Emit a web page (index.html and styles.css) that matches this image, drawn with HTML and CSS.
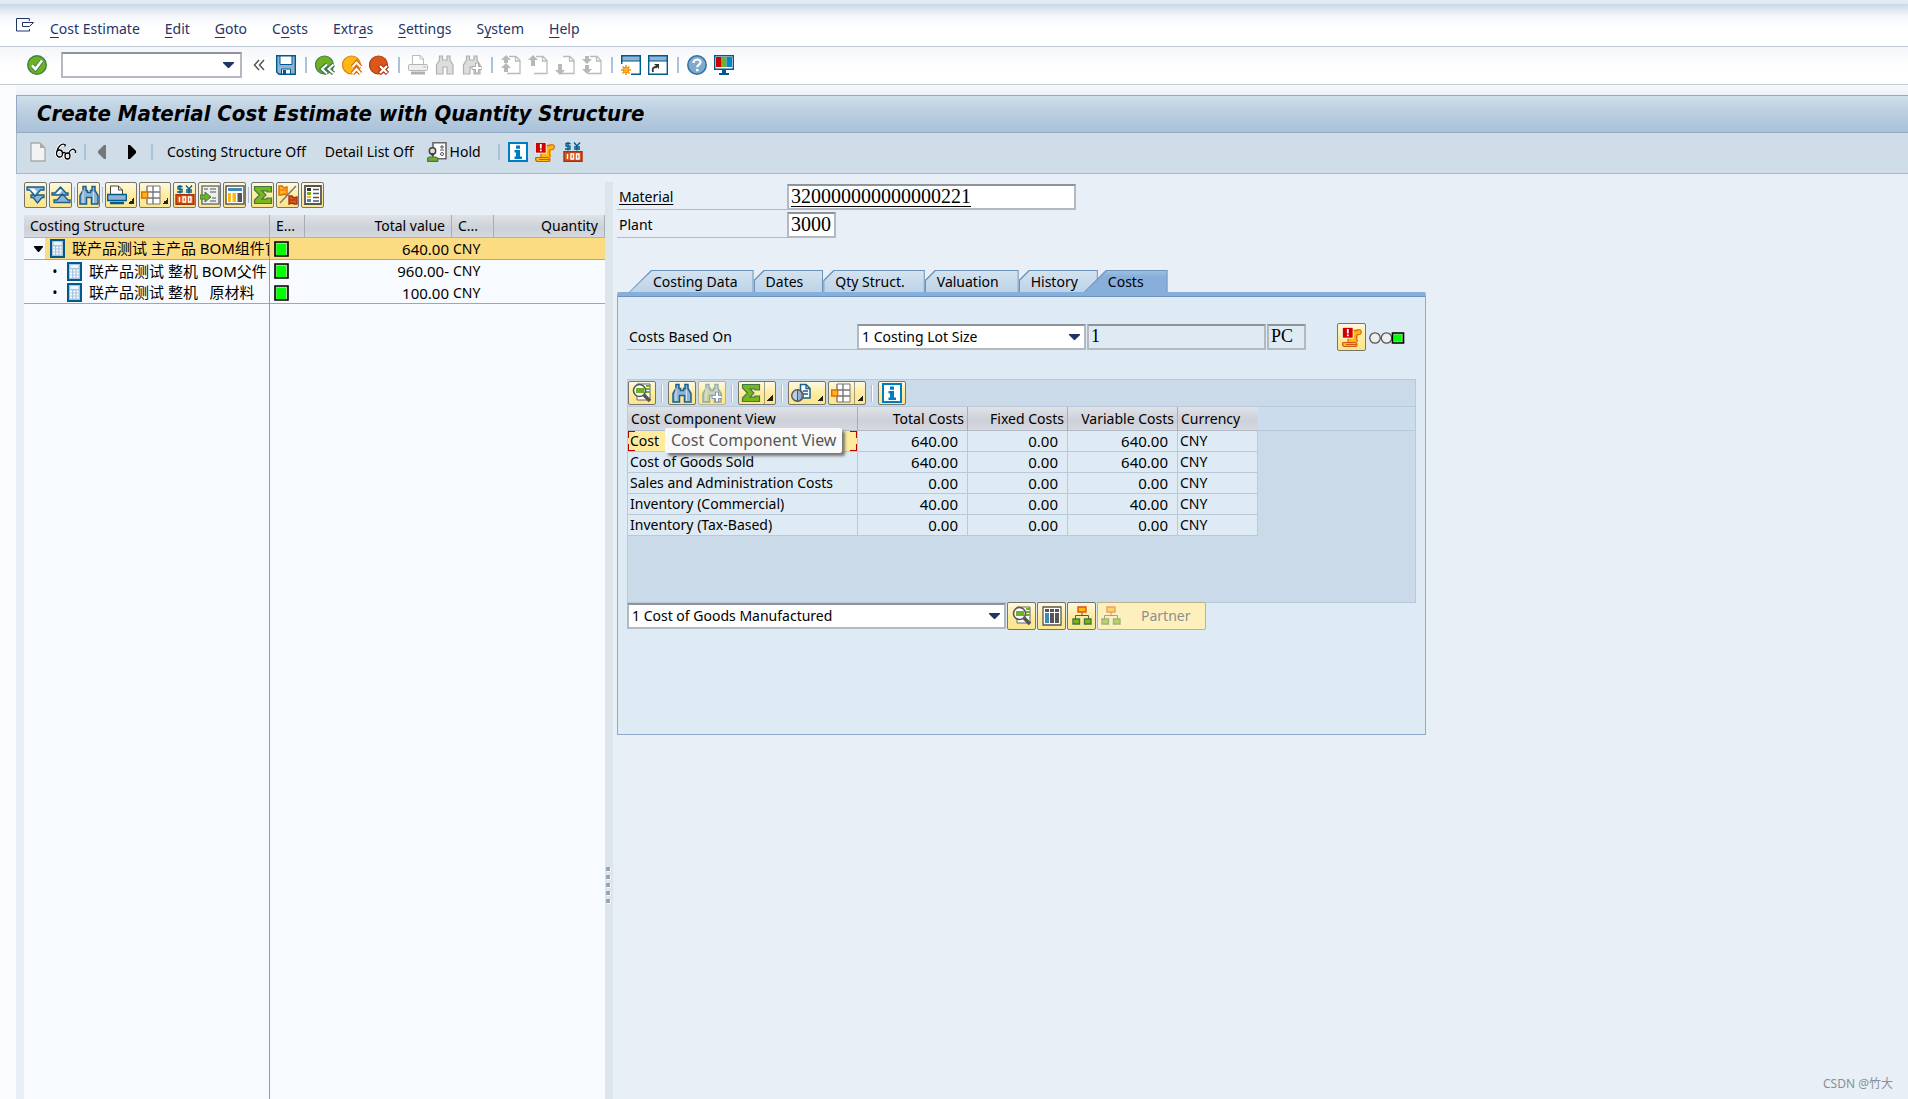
FILE: index.html
```html
<!DOCTYPE html>
<html lang="en">
<head>
<meta charset="utf-8">
<title>Create Material Cost Estimate with Quantity Structure</title>
<link rel="stylesheet" href="styles.css">
</head>
<body>
<svg class="defs" aria-hidden="true">
  <symbol id="ok" viewBox="0 0 20 20"><circle cx="10" cy="10" r="9.3" fill="#6fb024" stroke="#3f8048" stroke-width="1.4"/><path d="M5 10.500l3.500 3.500L15 5.500" fill="none" stroke="#3f8048" stroke-width="4.500"/><path d="M5 10.500l3.500 3.500L15 5.500" fill="none" stroke="#fff" stroke-width="2.600"/></symbol>
  <symbol id="save" viewBox="0 0 20 20"><path d="M.7 .7h18.600v18.600H3L.7 17z" fill="#8fb4d8" stroke="#005a8c" stroke-width="1.400"/><path d="M4 1h12v8.500H4z" fill="#fff" stroke="#005a8c"/><path d="M5.500 14h9v5h-9z" fill="#fff" stroke="#005a8c"/><path d="M7 15h3v4H7z" fill="#005a8c"/></symbol>
  <symbol id="back" viewBox="0 0 20 20"><circle cx="9.500" cy="10" r="9" fill="#6fb024" stroke="#3f8048" stroke-width="1.200"/><path d="M12 9.500L7 14l5 4.500M18.500 9.500L13.500 14l5 4.500" fill="none" stroke="#3f7848" stroke-width="4.500"/><path d="M12 9.500L7 14l5 4.500M18.500 9.500L13.500 14l5 4.500" fill="none" stroke="#fff" stroke-width="2"/></symbol>
  <symbol id="exit" viewBox="0 0 20 20"><circle cx="9.500" cy="10" r="9" fill="#fdb913" stroke="#e57a10" stroke-width="1.200"/><path d="M10.500 12l4-4.500 4 4.500M10.500 18.500l4-4.500 4 4.500" fill="none" stroke="#d96a10" stroke-width="4.500"/><path d="M10.500 12l4-4.500 4 4.500M10.500 18.500l4-4.500 4 4.500" fill="none" stroke="#fff" stroke-width="2"/></symbol>
  <symbol id="cancel" viewBox="0 0 20 20"><circle cx="9.500" cy="10" r="9" fill="#d9581a" stroke="#b33c10" stroke-width="1.200"/><path d="M10.500 10.500l8 8m0-8l-8 8" stroke="#a83010" stroke-width="4.500"/><path d="M11 11l7 7m0-7l-7 7" stroke="#fff" stroke-width="2.400"/></symbol>
  <symbol id="print-off" viewBox="0 0 20 20"><path d="M4.500 9V.5h8l3 3V9" fill="#fff" stroke="#bbb"/><path d="M12 .5V4h3.500" fill="none" stroke="#bbb"/><rect x=".5" y="9.500" width="19" height="6" rx="1" fill="#eee" stroke="#b5b5b5"/><path d="M15 12h3" stroke="#bbb"/><path d="M3 18h14" stroke="#b0b0b0" stroke-width="3"/></symbol>
  <symbol id="find-off" viewBox="0 0 20 20"><path d="M4.500 1h3v4H12V1h3v4l3 5v9h-6v-7H8v7H1.500v-9l3-5z" fill="#ddd" stroke="#b0b0b0" stroke-width="1.200"/></symbol>
  <symbol id="findnext-off" viewBox="0 0 20 20"><path d="M4.500 1h3v4H12V1h3v4l3 5v9h-6v-7H8v7H1.500v-9l3-5z" fill="#ddd" stroke="#b0b0b0" stroke-width="1.200"/><path d="M13.500 8h3v3.500H20v3h-3.500V18h-3v-3.500H10v-3h3.500z" fill="#fff" stroke="#aaa"/></symbol>
  <symbol id="sheet" viewBox="0 0 20 20"><path d="M6.500 18.500V1.500h8l5 5v12z" fill="#fff"/><path d="M8 1.500h7l4 4v13H6M14.500 1.500V6h5" fill="none" stroke="#bbb" stroke-width="1.300"/></symbol>
  <symbol id="first" viewBox="0 0 20 20"><use href="#sheet"/><path d="M5 0l5 5H7v3H3V5H0zM5 8l5 5H7v4H3v-4H0z" fill="#b8b8b8"/></symbol>
  <symbol id="prev" viewBox="0 0 20 20"><use href="#sheet"/><path d="M5 0l5 5H7v6H3V5H0z" fill="#b8b8b8"/></symbol>
  <symbol id="next" viewBox="0 0 20 20"><use href="#sheet"/><path d="M5 20l5-5H7V9H3v6H0z" fill="#b8b8b8"/></symbol>
  <symbol id="last" viewBox="0 0 20 20"><use href="#sheet"/><path d="M5 9l5-5H7V1H3v3H0zM5 19l5-5H7v-4H3v4H0z" fill="#b8b8b8"/></symbol>
  <symbol id="session" viewBox="0 0 20 20"><path d="M.7 .7h18.600v18.600H.7z" fill="#fff" stroke="#005a8c" stroke-width="1.400"/><path d="M1 1h18v5H1z" fill="#8fb4d8" stroke="#005a8c"/><path d="M0 9h10v11H0z" fill="#fff"/><path d="M5 10v10M0 15h10M1.500 11.500l7 7m0-7l-7 7" stroke="#f39200" stroke-width="1.500"/><circle cx="5" cy="15" r="2.800" fill="#fbb03b" stroke="#f39200"/></symbol>
  <symbol id="shortcut" viewBox="0 0 20 20"><path d="M.7 .7h18.600v18.600H.7z" fill="#fff" stroke="#005a8c" stroke-width="1.400"/><path d="M1 1h18v5H1z" fill="#8fb4d8" stroke="#005a8c"/><path d="M5 17c-1-4 0-5 4-5" fill="none" stroke="#333" stroke-width="1.800"/><path d="M6 9h5v5z" fill="#333"/></symbol>
  <symbol id="help" viewBox="0 0 20 20"><circle cx="10" cy="10" r="9.200" fill="#7fa9cf" stroke="#2f6f9f" stroke-width="1.500"/><path d="M6.500 8c0-4.500 7-4.500 7-.8 0 2.300-3.300 2.500-3.300 5" fill="none" stroke="#fff" stroke-width="2.200"/><path d="M9 14h2.500v2.300H9z" fill="#fff"/></symbol>
  <symbol id="monitor" viewBox="0 0 20 20"><path d="M.7 .7h18.600v13.600H.7z" fill="#fff" stroke="#005a8c" stroke-width="1.400"/><path d="M2 2h5v10H2z" fill="#c00"/><path d="M7 2h5.500v10H7z" fill="#6fb024"/><path d="M12.500 2H18v10h-5.500z" fill="#0a84c8"/><path d="M8 14.500h4V18h3v2H5v-2h3z" fill="#005a8c"/></symbol>
  <symbol id="page" viewBox="0 0 16 20"><path d="M1 1h9l5 5v13H1z" fill="#f3f3f3" stroke="#aaa" stroke-width="1.300"/><path d="M10 1v5h5z" fill="#aaa"/></symbol>
  <symbol id="glasses" viewBox="0 0 22 18"><path d="M1.500 10.500a3 3.500 0 1 1 6 0 3 3.500 0 1 1-6 0zM10 13a2.500 3 0 1 1 5 0 2.500 3 0 1 1-5 0M2 8c1-4 4-8 8-6.500M14 10c1-4 5-5 6.500-2" fill="none" stroke="#fff" stroke-width="3"/><path d="M1.500 10.500a3 3.500 0 1 1 6 0 3 3.500 0 1 1-6 0zM10 13a2.500 3 0 1 1 5 0 2.500 3 0 1 1-5 0M7 11c1-2 3-2 4 0M2 8c1-4 4-8 8-6.500v2M14 10c1-4 5-5 6.500-2v2" fill="none" stroke="#000" stroke-width="1.300"/></symbol>
  <symbol id="person" viewBox="0 0 20 20"><path d="M6 .8h13v16H6z" fill="#fff" stroke="#666" stroke-width="1.600"/><path d="M13 5h4M15 3v4M13 8h4" stroke="#555"/><circle cx="15" cy="12" r="1.500" fill="none" stroke="#555"/><circle cx="5.500" cy="9" r="3.200" fill="#ddd" stroke="#444" stroke-width="1.500"/><path d="M3 11l2.500 4L8 11z" fill="#444"/><path d="M.7 19.300v-3.300l2-1h6l2 1v3.300z" fill="#6fb024" stroke="#3f7848" stroke-width="1.200"/></symbol>
  <symbol id="info" viewBox="0 0 20 20"><path d="M1 1h18v18H1z" fill="#fff" stroke="#007cc0" stroke-width="2"/><path d="M8 3.500h4v3.300H8zM6.500 8H12v6.500h2V17H6.500v-2.500H8v-4H6.500z" fill="#007cc0"/></symbol>
  <symbol id="scroll" viewBox="0 0 20 20"><path d="M6 3.500h10v11.500H6z" fill="#fdb913"/><path d="M14 3.500c4-2 6 0 5 2.500-.5 1.500-2 1.800-3 1.500" fill="#fdb913" stroke="#e07010" stroke-width="1.300"/><path d="M11 3.500h5M6 11v4M15.500 7c-1.500 2-1.500 5 0 8" fill="none" stroke="#e07010" stroke-width="1.300"/><path d="M1 15.500h12c1.500 0 2 .5 2 2s-.5 2-2 2H2c-1.500-1-1.500-3-1-4z" fill="#fdb913" stroke="#d05a10" stroke-width="1.200"/><path d="M4 17.500h10" stroke="#d05a10"/><path d="M0 0h11.500v11.500H0z" fill="#fff"/><path d="M.8 .8h9.900v9.900H.8z" fill="#c00"/><path d="M4.900 2h1.800v4.500H4.900zM4.900 7.500h1.800v1.700H4.900z" fill="#fff"/></symbol>
  <symbol id="price" viewBox="0 0 20 20"><path d="M7.500 1.500H3v2.700h4V7H2M5 0v8.500M11 .5l3 3.500 3-3.500M11 5h6M11 7h6M14 4v4.500" fill="none" stroke="#005a8c" stroke-width="1.300"/><path d="M1 9.700h18v9.600H1z" fill="#d9581a" stroke="#a83010" stroke-width="1.400"/><path d="M4.500 12v5M8 12h2.500v5H8zM13.500 12H16v5h-2.500z" fill="none" stroke="#fff" stroke-width="1.400"/></symbol>
  <symbol id="expand" viewBox="0 0 20 20"><path d="M5 10h13v2.500h-2L11.500 18 7 12.500H5z" fill="#8fb4d8" stroke="#1a5f8c" stroke-width="1.300"/><path d="M1 2h17v3h-3.500L9 11.500 4 5H1z" fill="#8fb4d8" stroke="#1a5f8c" stroke-width="1.300"/><path d="M3 3.500h5l3 3-2 2.500z" fill="#fff"/></symbol>
  <symbol id="collapse" viewBox="0 0 20 20"><path d="M1 10v-2h3L9.500 2 15 8h2v2z" fill="#8fb4d8" stroke="#1a5f8c" stroke-width="1.300"/><path d="M3 17.500v-2.500h3l5.500-6 5.500 6h2v2.500z" fill="#8fb4d8" stroke="#1a5f8c" stroke-width="1.300"/><path d="M5 9l4.500-5 1.500 2-3 3z" fill="#fff"/></symbol>
  <symbol id="find" viewBox="0 0 20 20"><path d="M4 1.500h3v4h1.500v2h3v-2H13v-4h3v4l3 5V19h-6.500v-6.500h-5V19H1v-8.500l3-5z" fill="#8fb4d8" stroke="#1a5f8c" stroke-width="1.500"/><path d="M4 5v13M14.500 7v11" stroke="#d5e4f2"/></symbol>
  <symbol id="findnext" viewBox="0 0 20 20"><g opacity=".45"><use href="#find"/></g><path d="M13.500 9h3v3.500H20v3h-3.500V19h-3v-3.500H10v-3h3.500z" fill="#fff" stroke="#7f93c0"/></symbol>
  <symbol id="print" viewBox="0 0 20 20"><path d="M3.500 9V1h8l4 4v4" fill="#fff" stroke="#444"/><path d="M11.500 1v4h4" fill="none" stroke="#444"/><path d="M.7 9.500h18.600v6H.7z" fill="#8fb4d8" stroke="#005a8c" stroke-width="1.300"/><path d="M3 18h14" stroke="#005a8c" stroke-width="2.500"/></symbol>
  <symbol id="layout" viewBox="0 0 20 20"><path d="M6 1h13v18H6" fill="#fff" stroke="#777"/><path d="M12 1v18M6 1v18M6 7h13M6 13h13" stroke="#777" stroke-width="1.400"/><path d="M.7 7h6v6h-6z" fill="#fdb913" stroke="#e06a10" stroke-width="1.400"/></symbol>
  <symbol id="assign" viewBox="0 0 20 20"><path d="M2 1h17v18H2z" fill="#eee" stroke="#777" stroke-width="1.600"/><path d="M4 4h4M10 4h6M10 7h6M12 13h4M10 16h6" stroke="#888" stroke-width="1.500"/><path d="M0 10h5V7l6 5-6 5v-3H0z" fill="#6fb024" stroke="#3f7848"/></symbol>
  <symbol id="columns" viewBox="0 0 20 20"><path d="M1 1h18v18H1z" fill="#fff" stroke="#555" stroke-width="1.500"/><path d="M3 3h14v3H3z" fill="#3f88b8"/><path d="M3 8h3v9H3z" fill="#fdb913"/><path d="M7.500 8H11v9H7.500z" fill="#fdb913"/><path d="M12.500 8H17v9h-4.500z" fill="#555"/></symbol>
  <symbol id="sum" viewBox="0 0 20 20"><path d="M1.500 1.500h17V7H14V5.800H9l4 4.200-4 4.200h5V13h4.500v5.500h-17V15l5-5-5-5z" fill="#7ab51d" stroke="#3f7848" stroke-width="1.200"/></symbol>
  <symbol id="currency" viewBox="0 0 20 20"><path d="M1 1h3l2 2 3-1v8l-3-1-2 1H1z" fill="#fdb913" stroke="#e06a10" stroke-width="1.400"/><path d="M1 5h7" stroke="#e06a10"/><path d="M18 1L2 18" stroke="#777" stroke-width="1.500"/><path d="M11 11h3l2 2 3-1v7h-3l-2-1-3 1z" fill="#d9581a" stroke="#a83010" stroke-width="1.400"/><path d="M11 15h7" stroke="#a83010"/></symbol>
  <symbol id="legend" viewBox="0 0 20 20"><path d="M2 1h16v18H2z" fill="#fff" stroke="#555" stroke-width="1.800"/><path d="M4 3h4v3H4z" fill="#333"/><path d="M4 7h4v3H4z" fill="#6fb024"/><path d="M4 11h4v2H4z" fill="#fdb913"/><path d="M4 14h4v3H4z" fill="#3f88b8"/><path d="M10 4.500h6M10 8.500h6M10 12.500h6M10 16h6" stroke="#555" stroke-width="1.500"/></symbol>
  <symbol id="detail" viewBox="0 0 20 20"><path d="M5 1h13v16H5z" fill="#fff" stroke="#666"/><path d="M14 3h4M14 6h4M14 9h4" stroke="#6fb024" stroke-width="2"/><circle cx="7.500" cy="7.500" r="6" fill="#fff" stroke="#555" stroke-width="1.600"/><path d="M4 5h8v5H4z" fill="#6fb024"/><path d="M12 12l6 6" stroke="#555" stroke-width="3.600"/></symbol>
  <symbol id="view" viewBox="0 0 20 20"><path d="M9.500 1.500H15l4 4V15H9.500z" fill="#fff" stroke="#1a5f8c" stroke-width="1.500"/><path d="M15 1v4.500h4M12 8h5M12 11h5" fill="none" stroke="#1a5f8c" stroke-width="1.300"/><circle cx="6.500" cy="12.500" r="5.800" fill="#b9d0e4" stroke="#555" stroke-width="1.400"/><path d="M6.500 12.500v-5.800a6 6 0 0 1 0 11.600z" fill="#8fb4d8" stroke="#555"/></symbol>
  <symbol id="cols3" viewBox="0 0 20 20"><path d="M1 1h18v18H1z" fill="#fff" stroke="#555" stroke-width="1.300"/><path d="M3 3h4v3H3zM8 3h4v3H8zM13 3h4v3h-4zM8 7h4v10H8zM13 7h4v10h-4z" fill="#555"/><path d="M3 7h4v10H3z" fill="#3f88b8"/></symbol>
  <symbol id="tree" viewBox="0 0 20 20"><path d="M10 6v3.500M3.500 13V9.500h13V13" fill="none" stroke="#555"/><path d="M6 1h8v5H6z" fill="#fdb913" stroke="#e0501a" stroke-width="1.400"/><path d="M1 13h6.500v5H1zM12.500 13H19v5h-6.500z" fill="#7ab51d" stroke="#3f7848" stroke-width="1.400"/></symbol>
  <symbol id="calc" viewBox="0 0 15 19"><path d="M1 1h13v17H1z" fill="#a9c6e0" stroke="#005a8c" stroke-width="2"/><path d="M3.500 3h8v3h-8z" fill="#eef5fb"/><path d="M3 8.500h9M3 11.500h9M3 14.500h9" stroke="#fff" stroke-width="2" stroke-dasharray="2 1.300"/></symbol>
  <symbol id="led" viewBox="0 0 15 16"><path d="M1 1h13v14H1z" fill="#a8d8a0" stroke="#000" stroke-width="1.600"/><path d="M2.500 3h9.500v11H2.500z" fill="#0f0"/></symbol>
  <symbol id="lights" viewBox="0 0 36 12"><circle cx="6" cy="6" r="5.200" fill="#eee" stroke="#555" stroke-width="1.300"/><circle cx="17.500" cy="6" r="5.200" fill="#eee" stroke="#555" stroke-width="1.300"/><path d="M23.500 1h11v10h-11z" fill="#9d9" stroke="#000" stroke-width="1.600"/><path d="M25 2.500h7.500v7H25z" fill="#0f0"/></symbol>
</svg>

<nav class="menubar">
  <svg class="menu-mark" viewBox="0 0 18 14"><path d="M13.500 11v2H.5V.5h12.800V3" fill="none" stroke="#1f3468"/><path d="M6.500 4.500h11l-4 4h-7z" fill="#fff" stroke="#1f3468"/></svg>
  <a href="#"><u>C</u>ost Estimate</a><a href="#"><u>E</u>dit</a><a href="#"><u>G</u>oto</a><a href="#">C<u>o</u>sts</a><a href="#">Extr<u>a</u>s</a><a href="#"><u>S</u>ettings</a><a href="#">S<u>y</u>stem</a><a href="#"><u>H</u>elp</a>
</nav>

<div class="toolbar">
  <button class="ic" aria-label="Enter"><svg><use href="#ok"/></svg></button>
  <div class="command"><input type="text" aria-label="Command"><svg class="caret" viewBox="0 0 11 7"><path d="M0 0h11v1L6 6H5L0 1z"/></svg></div>
  <button class="chev" aria-label="Hide command field"><svg viewBox="0 0 12 12"><path d="M6 1L1.500 6 6 11M11 1L6.500 6 11 11" fill="none" stroke="#555" stroke-width="1.500"/></svg></button>
  <button class="ic" aria-label="Save"><svg><use href="#save"/></svg></button>
  <i class="sep"></i>
  <button class="ic" aria-label="Back"><svg><use href="#back"/></svg></button>
  <button class="ic" aria-label="Exit"><svg><use href="#exit"/></svg></button>
  <button class="ic" aria-label="Cancel"><svg><use href="#cancel"/></svg></button>
  <i class="sep"></i>
  <button class="ic" aria-label="Print"><svg><use href="#print-off"/></svg></button>
  <button class="ic" aria-label="Find"><svg><use href="#find-off"/></svg></button>
  <button class="ic" aria-label="Find next"><svg><use href="#findnext-off"/></svg></button>
  <i class="sep"></i>
  <button class="ic" aria-label="First page"><svg><use href="#first"/></svg></button>
  <button class="ic" aria-label="Previous page"><svg><use href="#prev"/></svg></button>
  <button class="ic" aria-label="Next page"><svg><use href="#next"/></svg></button>
  <button class="ic" aria-label="Last page"><svg><use href="#last"/></svg></button>
  <i class="sep"></i>
  <button class="ic" aria-label="New session"><svg><use href="#session"/></svg></button>
  <button class="ic" aria-label="Create shortcut"><svg><use href="#shortcut"/></svg></button>
  <i class="sep"></i>
  <button class="ic" aria-label="Help"><svg><use href="#help"/></svg></button>
  <button class="ic" aria-label="Customize layout"><svg><use href="#monitor"/></svg></button>
</div>

<div class="screen">
  <h1>Create Material Cost Estimate with Quantity Structure</h1>
  <div class="appbar">
    <button class="ic page" aria-label="New"><svg><use href="#page"/></svg></button>
    <button class="ic" aria-label="Display"><svg class="wide"><use href="#glasses"/></svg></button>
    <i class="sep"></i>
    <button class="ic back" aria-label="Previous"><svg viewBox="0 0 20 20"><path d="M14 3v14h-2L6 11V9l6-6z" fill="#777"/></svg></button>
    <button class="ic" aria-label="Next"><svg viewBox="0 0 20 20"><path d="M6 3v14h2l6-6V9L8 3z" fill="#000"/></svg></button>
    <i class="sep"></i>
    <button class="txt">Costing Structure Off</button>
    <button class="txt">Detail List Off</button>
    <button class="txt hold"><svg><use href="#person"/></svg>Hold</button>
    <i class="sep"></i>
    <button class="ic" aria-label="Information"><svg><use href="#info"/></svg></button>
    <button class="ic log" aria-label="Log"><svg><use href="#scroll"/></svg></button>
    <button class="ic" aria-label="Price"><svg><use href="#price"/></svg></button>
  </div>

  <div class="work">
    <section class="left">
      <div class="btns">
        <button aria-label="Expand"><svg><use href="#expand"/></svg></button>
        <button aria-label="Collapse"><svg><use href="#collapse"/></svg></button>
        <i></i>
        <button aria-label="Find"><svg><use href="#find"/></svg></button>
        <i></i>
        <button class="menu" aria-label="Print"><svg><use href="#print"/></svg></button>
        <button class="menu" aria-label="Layout"><svg><use href="#layout"/></svg></button>
        <button aria-label="Price"><svg><use href="#price"/></svg></button>
        <button aria-label="Assign"><svg><use href="#assign"/></svg></button>
        <button aria-label="Columns"><svg><use href="#columns"/></svg></button>
        <i></i>
        <button aria-label="Total"><svg><use href="#sum"/></svg></button>
        <button aria-label="Currency"><svg><use href="#currency"/></svg></button>
        <button aria-label="Legend"><svg><use href="#legend"/></svg></button>
      </div>
      <div class="treebox">
        <table class="costtree">
          <colgroup><col class="c-name"><col class="c-e"><col class="c-total"><col class="c-cur"><col></colgroup>
          <thead><tr><th>Costing Structure</th><th>E...</th><th class="r">Total value</th><th>C...</th><th class="r">Quantity</th></tr></thead>
          <tbody>
            <tr class="sel"><td><div class="node"><span class="twist"><svg viewBox="0 0 9 6"><path d="M0 0h9v1L5 6H4L0 1z"/></svg></span><span class="fill"><svg><use href="#calc"/></svg>联产品测试 主产品 BOM组件官</span></div></td><td><svg class="led"><use href="#led"/></svg></td><td class="r">640.00</td><td>CNY</td><td></td></tr>
            <tr><td><div class="node child"><span class="twist">•</span><span class="fill"><svg><use href="#calc"/></svg>联产品测试 整机 BOM父件</span></div></td><td><svg class="led"><use href="#led"/></svg></td><td class="r">960.00-</td><td>CNY</td><td></td></tr>
            <tr class="end"><td><div class="node child"><span class="twist">•</span><span class="fill"><svg><use href="#calc"/></svg>联产品测试 整机 &nbsp; 原材料</span></div></td><td><svg class="led"><use href="#led"/></svg></td><td class="r">100.00</td><td>CNY</td><td></td></tr>
          </tbody>
        </table>
      </div>
    </section>
    <div class="splitter"><b></b><b></b><b></b><b></b><b></b></div>

    <section class="right">
      <div class="field"><label for="mat"><u>Material</u></label><input id="mat" class="mat" value="320000000000000221"></div>
      <div class="field"><label for="plant">Plant</label><input id="plant" class="plant" value="3000"></div>

      <div class="tabs">
        <button class="wide">Costing Data</button><button>Dates</button><button>Qty Struct.</button><button>Valuation</button><button>History</button><button class="wide on">Costs</button>
      </div>
      <div class="panel">
        <div class="basis">
          <label for="basis">Costs Based On</label>
          <div class="combo"><select id="basis"><option>1 Costing Lot Size</option></select><svg class="caret" viewBox="0 0 11 7"><path d="M0 0h11v1L6 6H5L0 1z"/></svg></div>
          <input class="lot" value="1" readonly aria-label="Lot size">
          <input class="unit" value="PC" readonly aria-label="Unit">
          <button class="gold" aria-label="Log"><svg><use href="#scroll"/></svg></button>
          <svg class="lights"><use href="#lights"/></svg>
        </div>

        <div class="grid">
          <div class="btns">
            <button aria-label="Details"><svg><use href="#detail"/></svg></button>
            <i></i>
            <button aria-label="Find"><svg><use href="#find"/></svg></button>
            <button class="dim" aria-label="Find next"><svg><use href="#findnext"/></svg></button>
            <i></i>
            <button class="menu split" aria-label="Total"><svg><use href="#sum"/></svg></button>
            <i></i>
            <button class="menu" aria-label="Views"><svg><use href="#view"/></svg></button>
            <button class="menu split" aria-label="Layout"><svg><use href="#layout"/></svg></button>
            <i></i>
            <button aria-label="Information"><svg><use href="#info"/></svg></button>
          </div>
          <div class="gridhead">
          <table class="costs">
            <colgroup><col class="g-name"><col class="g-total"><col class="g-fixed"><col class="g-var"><col class="g-cur"></colgroup>
            <thead><tr><th>Cost Component View</th><th class="r">Total Costs</th><th class="r">Fixed Costs</th><th class="r">Variable Costs</th><th>Currency</th></tr></thead>
            <tbody>
              <tr><td class="cur"><span class="focus">Cost</span><span class="tip" role="tooltip">Cost Component View</span></td><td class="r">640.00</td><td class="r">0.00</td><td class="r">640.00</td><td>CNY</td></tr>
              <tr><td>Cost of Goods Sold</td><td class="r">640.00</td><td class="r">0.00</td><td class="r">640.00</td><td>CNY</td></tr>
              <tr><td>Sales and Administration Costs</td><td class="r">0.00</td><td class="r">0.00</td><td class="r">0.00</td><td>CNY</td></tr>
              <tr><td>Inventory (Commercial)</td><td class="r">40.00</td><td class="r">0.00</td><td class="r">40.00</td><td>CNY</td></tr>
              <tr><td>Inventory (Tax-Based)</td><td class="r">0.00</td><td class="r">0.00</td><td class="r">0.00</td><td>CNY</td></tr>
            </tbody>
          </table>
          </div>
        </div>

        <div class="viewrow">
          <div class="combo big"><select aria-label="Cost view"><option>1 Cost of Goods Manufactured</option></select><svg class="caret" viewBox="0 0 11 7"><path d="M0 0h11v1L6 6H5L0 1z"/></svg></div>
          <button class="gold" aria-label="Details"><svg><use href="#detail"/></svg></button>
          <button class="gold" aria-label="Columns"><svg><use href="#cols3"/></svg></button>
          <button class="gold" aria-label="Hierarchy"><svg><use href="#tree"/></svg></button>
          <button class="gold partner" disabled><svg><use href="#tree"/></svg><span>Partner</span></button>
        </div>
      </div>
    </section>
  </div>
</div>
<div class="watermark">CSDN @竹大</div>
</body>
</html>
```
FILE: styles.css
```css
* { box-sizing: border-box; }
html, body { margin: 0; }
body {
  position: relative;
  display: flex;
  flex-direction: column;
  min-height: 100vh;
  background: #fbfcfd;
  color: #000;
  font: 14px/20px "Noto Sans", "Noto Sans CJK SC", sans-serif;
}
button, input, select { font: inherit; color: inherit; margin: 0; border-radius: 0; }
button { padding: 0; border: 0; background: none; }
svg { display: block; flex: none; width: 20px; height: 20px; }
.defs { position: absolute; width: 0; height: 0; }

/* menu bar */
.menubar {
  display: flex;
  gap: 25px;
  align-items: center;
  height: 47px;
  padding: 8px 16px 0;
  border-top: 4px solid #e3eaf4;
  border-bottom: 1px solid #c3cad8;
  background: linear-gradient(#cbd7e9, #f4f7fb 12px, #fff 24px);
}
.menubar a { color: #1f3468; text-decoration: none; }
.menubar u { text-underline-offset: 3px; }
.menu-mark { width: 18px; height: 14px; margin: 0 -9px 8px 0; }

/* standard toolbar */
.toolbar {
  display: flex;
  gap: 7px;
  align-items: center;
  height: 38px;
  padding: 0 27px 2px;
  border-bottom: 1px solid #c3cad8;
  background: linear-gradient(#f3f6fa, #fff 20px);
}
.ic { width: 20px; height: 20px; }
.sep { flex: none; width: 5px; height: 16px; background: linear-gradient(90deg, transparent 2px, #a9c3de 2px, #a9c3de 4px, transparent 4px); }
.command, .combo { position: relative; }
.command { width: 181px; margin: 0 4px 0 7px; }
.command input {
  width: 100%; height: 26px; display: block;
  border: 2px solid #b4b8c0; border-top-color: #8e939c; background: #fff;
}
.caret { position: absolute; right: 8px; top: 10px; width: 11px; height: 7px; fill: #1f3468; pointer-events: none; }
.chev { width: 12px; height: 12px; margin-right: 4px; }
.chev svg { width: 12px; height: 12px; }

/* screen body */
.screen {
  flex: 1;
  display: flex;
  flex-direction: column;
  margin-left: 16px;
  padding-top: 10px;
  background: linear-gradient(#f7f9fc, #e8eff6 14px);
}
h1 {
  margin: 0;
  height: 38px;
  padding: 0 20px;
  border: 1px solid #93aac2;
  border-right: 0;
  background: linear-gradient(#cfdfeb, #bdd0e1 40%, #a9c1da);
  font: italic bold 22px/35px "DejaVu Sans Condensed", "DejaVu Sans", sans-serif;
}
.appbar {
  display: flex;
  align-items: center;
  gap: 7px;
  height: 41px;
  padding: 0 13px 2px;
  border: solid #a3b9cc;
  border-width: 0 0 1px 1px;
  background: #cfdde8;
}
.appbar .page { width: 16px; margin-right: 2px; }
.appbar .page svg { width: 16px; }
.appbar svg.wide { width: 22px; height: 18px; }
.appbar .back { margin: 0 3px 0 -2px; }
.txt { display: flex; align-items: center; gap: 3px; margin: 0 6px; }
.appbar .hold { margin: 0 8px 0 0; }
.log { margin-right: 1px; }
.work { flex: 1; display: flex; padding: 8px 0 0 8px; }

/* gold buttons */
.btns { display: flex; gap: 2px; }
.btns i { flex: none; width: 1px; margin: 5px 0; background: #aebccb; }
.btns button, .gold {
  position: relative;
  display: flex;
  align-items: center;
  justify-content: center;
  border: 1px solid #77756a;
  border-radius: 2px;
  background: linear-gradient(#fff8e0, #fdeb9b 55%, #fbe68f);
}
.btns .menu { justify-content: flex-start; padding-left: 1px; }
.btns .menu::after {
  content: "";
  position: absolute;
  right: 2px;
  bottom: 3px;
  width: 6px;
  height: 6px;
  background: linear-gradient(135deg, transparent 50%, #222 50%);
}

/* left pane */
.left { flex: none; width: 581px; display: flex; flex-direction: column; }
.left .btns button { width: 23px; height: 26px; }
.left .btns .menu { width: 32px; }
.treebox {
  flex: 1;
  margin-top: 7px;
  background: linear-gradient(90deg, transparent 245px, #8c9cb0 245px, #8c9cb0 246px, transparent 246px) #f7fbff;
}
table { border-collapse: separate; border-spacing: 0; table-layout: fixed; }
th, td { padding: 0; font-weight: normal; text-align: left; white-space: nowrap; overflow: hidden; }
.r { text-align: right; }
td.r { font-size: 15px; }
.costtree { width: 100%; }
.c-name { width: 246px; }
.c-e { width: 35px; }
.c-total { width: 147px; }
.c-cur { width: 42px; }
.costtree th { height: 23px; padding: 0 6px; border-right: 1px solid #a5adb8; border-bottom: 1px solid #a5b4c6; background: linear-gradient(#e0e3e7, #ccd0d8 60%, #d6d9df); }
.costtree td { height: 22px; padding: 0; }
.costtree td:first-child { border-right: 1px solid #8c9cb0; }
.costtree td.r { padding-right: 3px; }
.costtree td.r + td { padding-left: 1px; }
.costtree .sel td { border-bottom: 1px solid #93aac2; background: #fcdc82; }
.costtree .sel td:first-child { background: #f7fbff; }
.costtree .end td { border-bottom: 1px solid #93aac2; }
.led { width: 15px; height: 16px; margin-left: 4px; }
.node { display: flex; height: 21px; line-height: 21px; }
.twist { flex: none; width: 21px; display: flex; align-items: center; justify-content: center; padding-left: 8px; }
.twist svg { width: 9px; height: 6px; }
.child .twist { width: 38px; padding-left: 24px; }
.fill { flex: 1; display: flex; gap: 7px; align-items: center; padding-left: 5px; font-size: 15px; white-space: pre; overflow: hidden; }
.sel .fill { background: #fcdc82; }
.fill svg { width: 15px; height: 19px; }

.splitter {
  flex: none;
  width: 8px;
  display: flex;
  flex-direction: column;
  gap: 4px;
  padding: 0 2px 196px 1px;
  justify-content: flex-end;
  background: #dbe5ea;
}
.splitter b { width: 4px; height: 4px; background: #96a5b8; box-shadow: 1px 1px #fff; }

/* right pane */
.right { flex: 1; padding: 2px 4px; }
.field { display: flex; height: 26px; margin-bottom: 2px; }
.field label { width: 170px; padding: 3px 2px 0; border-bottom: 1px solid #b5b9bd; }
.field u { text-underline-offset: 2px; }
.field input, .basis input {
  height: 26px;
  padding: 0 2px 2px;
  border: 2px solid #b4b8c0;
  border-top-color: #8e939c;
  background: #fff;
  font: 20px/22px "Liberation Serif", serif;
}
.field .mat { width: 289px; text-decoration: underline; text-underline-offset: 3px; text-decoration-thickness: 1px; }
.field .plant { width: 49px; }

.tabs { display: flex; margin: 32px 0 0 12px; height: 22px; }
.tabs button {
  position: relative;
  z-index: 0;
  padding: 2px 20px 0 12px;
  background: #6d93bb;
  clip-path: polygon(0 10px, 10px 0, 100% 0, 100% 100%, 0 100%);
}
.tabs button::before {
  content: "";
  position: absolute;
  z-index: -1;
  inset: 1px 1px 0 1px;
  background: linear-gradient(#d3e2ef, #bdd3e8);
  clip-path: polygon(0 10px, 10px 0, 100% 0, 100% 100%, 0 100%);
}
.tabs .wide { padding: 2px 16px 0 24px; }
.tabs .wide, .tabs .wide::before { clip-path: polygon(0 100%, 22px 0, 100% 0, 100% 100%); }
.tabs .on { margin-left: -14px; padding-right: 24px; z-index: 1; }
.tabs .on::before { background: linear-gradient(#9dc0e0, #88aedb 6px); }

.panel {
  max-width: 809px;
  min-height: 443px;
  padding: 28px 9px 0;
  border: 1px solid #8eabc8;
  border-top: 4px solid #88aedb;
  border-radius: 2px 2px 0 0;
  background: #dfebf4;
  box-shadow: inset 0 1px #6d93bb;
}
.basis { display: flex; align-items: flex-start; }
.basis label { width: 230px; height: 26px; padding: 3px 2px 0; border-bottom: 1px solid #b5bcc3; }
.combo { width: 229px; }
.combo select {
  appearance: none;
  display: block;
  width: 100%;
  height: 26px;
  padding: 0 3px 1px;
  border: 2px solid #b4b8c0;
  border-top-color: #8e939c;
  background: #fff;
}
.combo .caret { right: 6px; }
.basis input { background: #dfebf4; margin-left: 1px; font-size: 18px; }
.basis .lot { width: 179px; }
.basis .unit { width: 39px; }
.gold { width: 29px; height: 28px; }
.basis .gold { margin: -1px 3px 0 31px; }
.lights { width: 36px; height: 12px; margin-top: 8px; }

.grid { margin-top: 28px; height: 224px; border: 1px solid #b9c9da; background: #cadae9; }
.grid .btns { height: 26px; padding-top: 1px; }
.grid .btns button { width: 28px; height: 24px; }
.grid .btns .menu { width: 38px; padding-left: 2px; }
.grid .btns .split::before { content: ""; position: absolute; left: 25px; top: 0; bottom: 0; border-left: 1px solid #a39d80; }
.grid .btns i { width: 2px; margin: 4px 3px; border-right: 1px solid #fff; }
.grid .dim { border-color: #b5b29a; }
.gridhead { border-top: 1px solid #b9c9da; background: linear-gradient(#cbdcec 23px, #b9c9da 23px, #b9c9da 24px, transparent 24px); }
.costs { width: 630px; }
.g-name { width: 230px; }
.g-total { width: 110px; }
.g-fixed { width: 100px; }
.g-var { width: 110px; }
.g-cur { width: 80px; }
.costs th { height: 24px; padding: 0 3px; border-right: 1px solid #a5adb8; border-bottom: 1px solid #b0bac6; background: linear-gradient(#e0e3e7, #ccd0d8 60%, #d6d9df); }
.costs th:last-child { border-right: 0; }
.costs td { height: 21px; padding: 0 2px; line-height: 20px; border-right: 1px solid #b9c9da; border-bottom: 1px solid #b9c9da; background: #dfebf4; }
.costs td.r { padding-right: 9px; }
.costs td.cur { position: relative; overflow: visible; padding: 0; }
.focus {
  display: block;
  height: 20px;
  padding-left: 2px;
  background:
    linear-gradient(#b00, #b00) 0 0 / 7px 1px, linear-gradient(#b00, #b00) 0 0 / 1px 7px,
    linear-gradient(#b00, #b00) 100% 0 / 7px 1px, linear-gradient(#b00, #b00) 100% 0 / 1px 7px,
    linear-gradient(#b00, #b00) 0 100% / 7px 1px, linear-gradient(#b00, #b00) 0 100% / 1px 7px,
    linear-gradient(#b00, #b00) 100% 100% / 7px 1px, linear-gradient(#b00, #b00) 100% 100% / 1px 7px,
    #ffeb9c;
  background-repeat: no-repeat;
}
.tip {
  position: absolute;
  left: 37px;
  top: -3px;
  height: 25px;
  padding: 0 6px;
  border-radius: 2px;
  background: #f9f9f9;
  box-shadow: 3px 3px 3px #777;
  color: #575757;
  font-size: 16px;
  line-height: 24px;
}
.viewrow { display: flex; gap: 1px; align-items: center; margin-top: -1px; }
.combo.big { width: 379px; }
.gold.partner { width: 109px; justify-content: flex-start; padding-left: 3px; color: #8f8f8f; border-color: #b9b28a; background: #fdf0bd; }
.partner svg { opacity: .5; }
.partner span { margin-left: 20px; }

.watermark { position: absolute; right: 15px; bottom: 5px; color: #8a8f94; font-size: 12px; }
```
